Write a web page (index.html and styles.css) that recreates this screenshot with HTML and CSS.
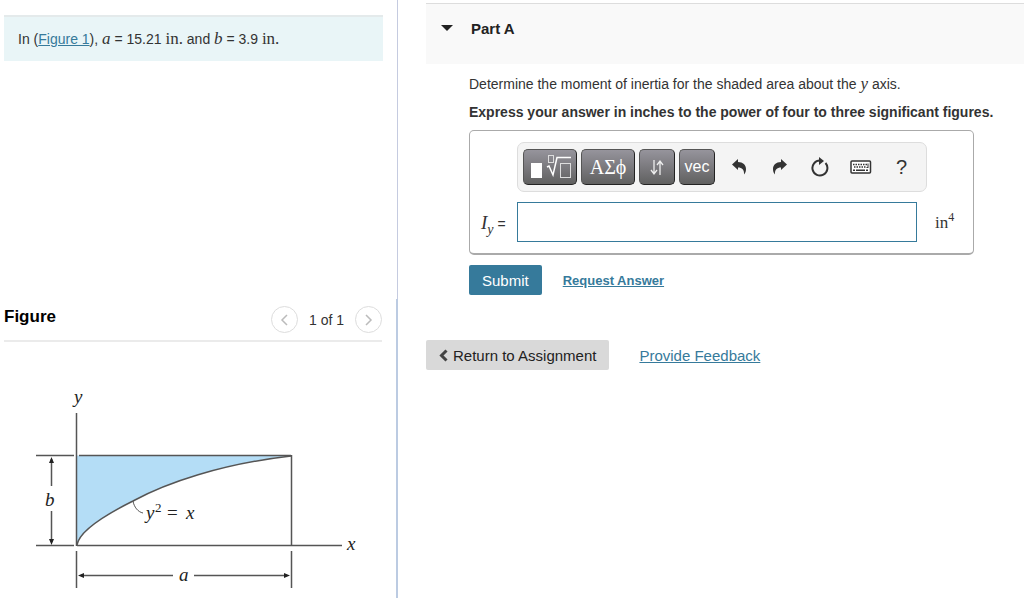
FILE: index.html
```
<!DOCTYPE html>
<html lang="en">
<head>
    <meta charset="utf-8">
    <title>Part A</title>
    <link rel="stylesheet" href="styles.css">
</head>
<body>
    <aside class="sidebar">
        <section class="problem">
            <div class="given">
                In (<a href="#figure">Figure 1</a>), <i class="math">a</i> = 15.21 <span class="math">in.</span> and <i class="math">b</i> = 3.9 <span class="math">in.</span>
            </div>
        </section>
        <section class="figure" id="figure">
            <header class="figure-header">
                <h2>Figure</h2>
                <nav class="pager">
                    <button type="button" aria-label="Previous figure">
                        <svg width="10" height="14" viewBox="0 0 10 14"><path d="M8 2L3 7l5 5"/></svg>
                    </button>
                    <span>1 of 1</span>
                    <button type="button" aria-label="Next figure">
                        <svg width="10" height="14" viewBox="0 0 10 14"><path d="M2 2l5 5-5 5"/></svg>
                    </button>
                </nav>
            </header>
            <svg class="diagram" viewBox="4 342 378 256" role="img" aria-label="Shaded area between y squared = x and the line y = b">
                <!-- shaded area -->
                <path class="shade" d="M77 455.500H291C221 464 166 483 133 501C103 516 79 532 77 545Z"/>
                <!-- axes and extension lines -->
                <path class="line" d="M76.500 413V546M36 455.500H74M79 455.500H291M36 545.500H74M77 545.500H342M291.500 455V546M76.500 551V588M291.500 551V588"/>
                <path class="line" d="M291 456C221 464 166 483 133 501C103 516 79 532 77 545"/>
                <path class="thin" d="M133 501C134 507 138 512 143 513"/>
                <!-- dimensions -->
                <path class="line" d="M51.500 459V486M51.500 511V542M81 575.500H173M194 575.500H287"/>
                <path class="arrow" d="M51.500 457l-2.500 6h5zM51.500 545l-2.500-6h5zM78 575.500l6-2.500v5zM290 575.500l-6-2.500v5z"/>
                <text x="74" y="403">y</text>
                <text x="45" y="506">b</text>
                <text x="179" y="581">a</text>
                <text x="347" y="550">x</text>
                <text x="146" y="519">y</text>
                <text class="sup" x="155" y="512">2</text>
                <text class="upright" x="167" y="519">=</text>
                <text x="186" y="519">x</text>
            </svg>
        </section>
    </aside>

    <main class="content">
        <header class="part-header">
            <button type="button" class="toggle" aria-label="Collapse Part A">
                <svg width="12" height="6" viewBox="0 0 12 6"><path d="M0 0h12L6 6z" fill="#222"/></svg>
            </button>
            <h1>Part A</h1>
        </header>

        <form class="part-body">
            <p class="question">Determine the moment of inertia for the shaded area about the <i class="math">y</i> axis.</p>
            <p class="instructions">Express your answer in inches to the power of four to three significant figures.</p>

            <div class="answer-box">
                <div class="toolbar">
                    <button type="button" class="key wide" aria-label="Templates">
                        <svg width="42" height="26" viewBox="0 0 42 26">
                            <rect x="2" y="9" width="11" height="15" fill="#fff"/>
                            <g fill="none" stroke="#ddd">
                                <rect x="19.500" y="1.500" width="5" height="7"/>
                                <rect x="31.500" y="9.500" width="10" height="14"/>
                                <path d="M18 13l2-1 4 9 4-17.500h14" stroke="#fff" stroke-width="1.500"/>
                            </g>
                        </svg>
                    </button>
                    <button type="button" class="key wide greek">ΑΣϕ</button>
                    <button type="button" class="key" aria-label="Arrows">
                        <svg width="16" height="18" viewBox="0 0 16 18" fill="none" stroke="#eee" stroke-width="1.300"><path d="M5 2v14M2 12l3 4 3-4M11 17V3M8 7l3-4 3 4"/></svg>
                    </button>
                    <button type="button" class="key">vec</button>
                    <div class="tools">
                        <button type="button" aria-label="Undo">
                            <svg width="16" height="16" viewBox="0 0 16 16"><path d="M1 5.500L7 0v3c5 0 8 3 8 7 0 2-.5 4-2 5.500C13.500 11 11 8.500 7 8.500V11z"/></svg>
                        </button>
                        <button type="button" aria-label="Redo">
                            <svg width="16" height="16" viewBox="0 0 16 16"><path d="M15 5.500L9 0v3c-5 0-8 3-8 7 0 2 .5 4 2 5.500C2.500 11 5 8.500 9 8.500V11z"/></svg>
                        </button>
                        <button type="button" aria-label="Reset">
                            <svg width="20" height="20" viewBox="0 0 20 20"><path d="M10 3.500A7.500 7.500 0 1 0 15.500 6" fill="none" stroke="#333" stroke-width="2"/><path d="M9 0l5 4-5 4z"/></svg>
                        </button>
                        <button type="button" aria-label="Keyboard">
                            <svg width="22" height="16" viewBox="0 0 22 16"><rect x="1" y="2" width="19.500" height="12" rx="1" fill="#fff" stroke="#333" stroke-width="1.500"/><path d="M3 5.500h14M4 8h12" fill="none" stroke="#333" stroke-width="1.500" stroke-dasharray="1.500 1"/><path d="M3 10.500h2V12H3zM6 10.500h9V12H6zM16 10.500h2V12h-2zM17.500 4.500h1V9h-2V8h1z"/></svg>
                        </button>
                        <button type="button" class="help" aria-label="Help">?</button>
                    </div>
                </div>
                <label class="symbol" for="answer"><i class="math">I<sub>y</sub></i> =</label>
                <input type="text" id="answer" name="answer" autocomplete="off">
                <span class="unit math">in<sup>4</sup></span>
            </div>

            <div class="actions">
                <button type="submit" class="submit">Submit</button>
                <a href="#" class="request">Request Answer</a>
            </div>
        </form>

        <footer class="page-actions">
            <button type="button" class="return">
                <svg width="9" height="13" viewBox="0 0 9 13"><path d="M7.500 1.500L2.500 6.500l5 5" fill="none" stroke="#444" stroke-width="3"/></svg>
                Return to Assignment
            </button>
            <a href="#">Provide Feedback</a>
        </footer>
    </main>
</body>
</html>
```
FILE: styles.css
```
* {
    box-sizing: border-box;
}
body {
    margin: 0;
    display: flex;
    min-height: 100vh;
    font-family: "Liberation Sans", Arial, sans-serif;
    font-size: 14px;
    color: #333;
    background: #fff;
}
h1, h2, p {
    margin: 0;
}
a {
    color: #367a9b;
}
button {
    font-family: inherit;
    cursor: pointer;
    border: none;
    padding: 0;
}
svg {
    display: block;
}
.math {
    font-family: "Liberation Serif", "Times New Roman", serif;
    font-size: 17px;
    line-height: 1;
}

/* left side */
.sidebar {
    flex: 0 0 398px;
    display: flex;
    flex-direction: column;
}
.problem {
    flex: 1;
    padding: 15px 14px 0 4px;
    border-right: 1px solid #c5cbe0;
}
.given {
    padding: 13px 14px;
    line-height: 18px;
    background: #e9f5f7;
    border-top: 2px solid #e4eaeb;
}
.figure {
    padding: 0 14px 0 4px;
    border-right: 2px solid #bccbe2;
}
.figure-header {
    display: flex;
    align-items: center;
    justify-content: space-between;
    height: 43px;
    border-bottom: 2px solid #ebebeb;
}
.figure-header h2 {
    font-size: 17px;
    line-height: 20px;
    padding-bottom: 6px;
    color: #000;
}
.pager {
    display: flex;
    align-items: center;
    gap: 11px;
}
.pager button {
    display: flex;
    align-items: center;
    justify-content: center;
    width: 27px;
    height: 27px;
    border: 1px solid #ddd;
    border-radius: 50%;
    background: #fff;
}
.pager path {
    fill: none;
    stroke: #bbb;
    stroke-width: 1.5;
}
.diagram {
    width: 100%;
}
.diagram .shade {
    fill: #b4ddf6;
}
.diagram .line {
    fill: none;
    stroke: #555;
    stroke-width: 1.5;
}
.diagram .thin {
    fill: none;
    stroke: #555;
}
.diagram .arrow {
    fill: #222;
}
.diagram text {
    font-family: "Liberation Serif", "Times New Roman", serif;
    font-size: 19px;
    font-style: italic;
    fill: #222;
}
.diagram .upright,
.diagram .sup {
    font-style: normal;
}
.diagram .sup {
    font-size: 13px;
}

/* right side */
.content {
    flex: 1;
    min-width: 0;
    padding: 3px 0 0 28px;
}
.part-header {
    display: flex;
    align-items: flex-start;
    gap: 18px;
    height: 61px;
    padding: 16px 15px;
    background: #f9f9f9;
    border-top: 1px solid #ddd;
}
.part-header h1 {
    font-size: 15px;
    line-height: 18px;
    color: #222;
}
.toggle {
    display: flex;
    align-items: center;
    height: 16px;
    background: none;
}
.part-body {
    padding: 10px 24px 0 43px;
}
.question,
.instructions {
    font-size: 14px;
    line-height: 20px;
}
.instructions {
    font-weight: bold;
    margin: 8px 0;
}
.answer-box {
    display: grid;
    grid-template-columns: 36px 1fr 50px;
    gap: 10px 0;
    align-items: center;
    max-width: 505px;
    padding: 11px 6px 11px 11px;
    border: 1px solid #aaa;
    border-bottom-width: 2px;
    border-radius: 5px;
}
.toolbar {
    grid-column: 2 / 4;
    display: flex;
    align-items: center;
    gap: 4px;
    height: 50px;
    margin-right: 40px;
    padding: 0 4px 0 5px;
    background: #f4f4f4;
    border: 1px solid #ddd;
    border-radius: 7px;
}
.key {
    display: flex;
    align-items: center;
    justify-content: center;
    width: 36px;
    height: 36px;
    font-size: 16px;
    color: #fff;
    background: linear-gradient(#96949c, #606060);
    border: 1px solid #555;
    border-right-color: #222;
    border-bottom-color: #222;
    border-radius: 5px;
}
.key.wide {
    width: 54px;
}
.greek {
    font-family: "Liberation Serif", "Times New Roman", serif;
    font-size: 20px;
}
.tools {
    flex: 1;
    display: flex;
    align-items: center;
    justify-content: space-around;
}
.tools button {
    display: flex;
    align-items: center;
    justify-content: center;
    width: 24px;
    height: 36px;
    background: none;
    color: #333;
    fill: #333;
}
.tools .help {
    font-size: 20px;
}
.symbol {
    white-space: nowrap;
}
.symbol .math {
    font-size: 19px;
}
.symbol sub {
    font-size: 14px;
    line-height: 0;
}
#answer {
    width: 100%;
    height: 40px;
    padding: 0 8px;
    font: inherit;
    border: 1px solid #367a9b;
}
.unit {
    padding-left: 18px;
}
.unit sup {
    font-size: 12px;
    line-height: 0;
}
.actions {
    display: flex;
    align-items: center;
    gap: 21px;
    margin-top: 10px;
}
.submit {
    height: 30px;
    padding: 0 13px;
    font-size: 15px;
    color: #fff;
    background: #367a9b;
    border-radius: 2px;
}
.request {
    font-size: 13px;
    font-weight: bold;
}
.page-actions {
    display: flex;
    align-items: center;
    gap: 30px;
    margin-top: 45px;
}
.return {
    display: flex;
    align-items: center;
    gap: 5px;
    height: 30px;
    padding: 0 13px;
    font-size: 15px;
    color: #222;
    background: #d9d9d9;
    border-radius: 2px;
}
.page-actions a {
    font-size: 15px;
}
```
